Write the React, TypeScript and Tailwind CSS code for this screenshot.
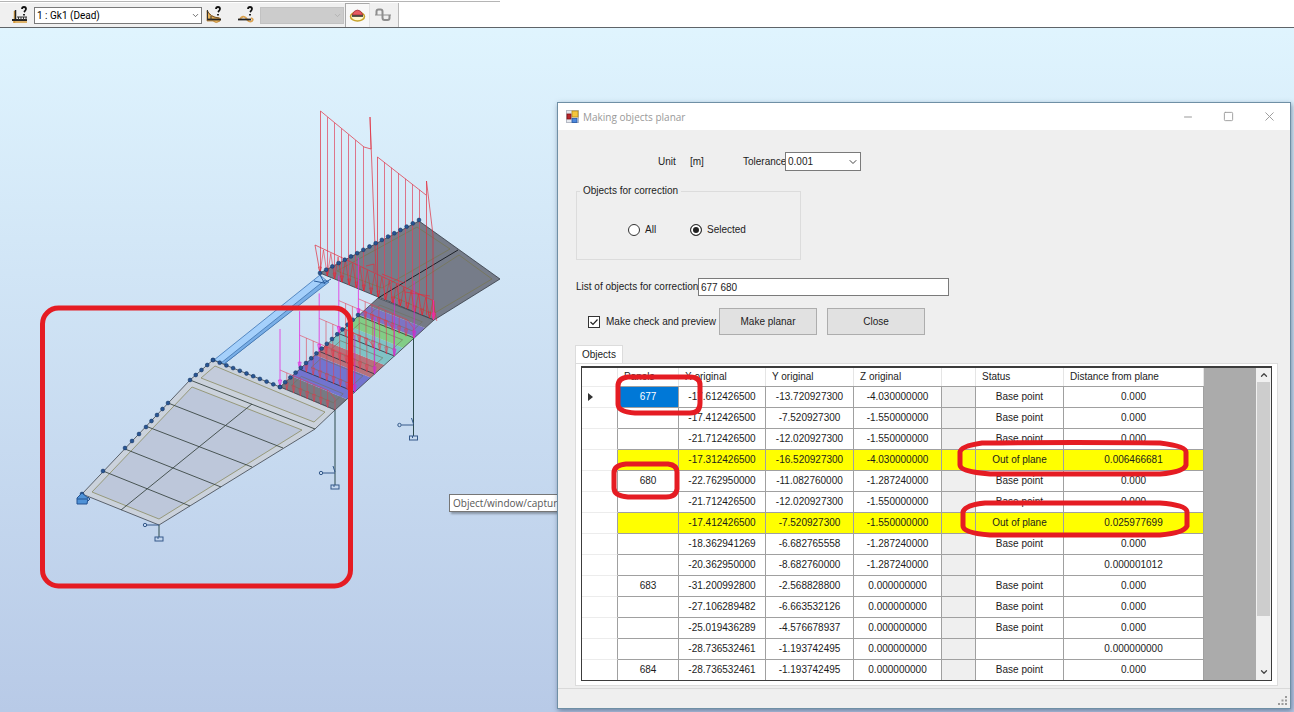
import React, { useState } from 'react';
import { ChevronDown, ChevronUp, Minus, Square, X } from 'lucide-react';

type Point = [number, number];

interface Row {
  panel: string;
  x: string;
  y: string;
  z: string;
  status: string;
  distance: string;
}

const rows: Row[] = [
  { panel: '677', x: '-17.612426500', y: '-13.720927300', z: '-4.030000000', status: 'Base point', distance: '0.000' },
  { panel: '', x: '-17.412426500', y: '-7.520927300', z: '-1.550000000', status: 'Base point', distance: '0.000' },
  { panel: '', x: '-21.712426500', y: '-12.020927300', z: '-1.550000000', status: 'Base point', distance: '0.000' },
  { panel: '', x: '-17.312426500', y: '-16.520927300', z: '-4.030000000', status: 'Out of plane', distance: '0.006466681' },
  { panel: '680', x: '-22.762950000', y: '-11.082760000', z: '-1.287240000', status: 'Base point', distance: '0.000' },
  { panel: '', x: '-21.712426500', y: '-12.020927300', z: '-1.550000000', status: 'Base point', distance: '0.000' },
  { panel: '', x: '-17.412426500', y: '-7.520927300', z: '-1.550000000', status: 'Out of plane', distance: '0.025977699' },
  { panel: '', x: '-18.362941269', y: '-6.682765558', z: '-1.287240000', status: 'Base point', distance: '0.000' },
  { panel: '', x: '-20.362950000', y: '-8.682760000', z: '-1.287240000', status: '', distance: '0.000001012' },
  { panel: '683', x: '-31.200992800', y: '-2.568828800', z: '0.000000000', status: 'Base point', distance: '0.000' },
  { panel: '', x: '-27.106289482', y: '-6.663532126', z: '0.000000000', status: 'Base point', distance: '0.000' },
  { panel: '', x: '-25.019436289', y: '-4.576678937', z: '0.000000000', status: 'Base point', distance: '0.000' },
  { panel: '', x: '-28.736532461', y: '-1.193742495', z: '0.000000000', status: '', distance: '0.000000000' },
  { panel: '684', x: '-28.736532461', y: '-1.193742495', z: '0.000000000', status: 'Base point', distance: '0.000' },
];

const lerp = (a: Point, b: Point, t: number): Point => [a[0] + (b[0] - a[0]) * t, a[1] + (b[1] - a[1]) * t];
const pts = (list: Point[]) => list.map((p) => p.join(',')).join(' ');
const spread = (a: Point, b: Point, count: number) =>
  Array.from({ length: count }, (_, i) => lerp(a, b, i / (count - 1)));

// Ramp between the lower deck and the upper deck
const leftSide = (t: number) => lerp([280, 387], [378, 298], t);
const rightSide = (t: number) => lerp([335, 410], [434, 320], t);

const bands = [
  { from: 0, to: 0.12, fill: '#767a83' },
  { from: 0.12, to: 0.36, fill: '#7274cf' },
  { from: 0.36, to: 0.5, fill: '#b7727c' },
  { from: 0.5, to: 0.69, fill: '#7fc3c6' },
  { from: 0.69, to: 0.81, fill: '#82cd86' },
  { from: 0.81, to: 0.91, fill: '#7c74c4' },
  { from: 0.91, to: 1, fill: '#767a86' },
];

const nodes: Point[] = [
  ...spread([320, 273], [419, 220], 17),
  ...spread([213, 360], [280, 387], 11),
  ...spread([280, 387], [358, 315], 16),
  ...spread([190, 380], [213, 360], 5),
  ...spread([168, 403], [146, 427], 5),
  ...spread([139, 434], [125, 448], 3),
  [103, 471],
  [82, 494],
];

const Arrow: React.FC<{ x: number; top: number; bottom: number; color: string }> = ({ x, top, bottom, color }) => (
  <path d={`M${x} ${top}V${bottom}M${x - 1.5} ${bottom - 7}L${x} ${bottom}L${x + 1.5} ${bottom - 7}Z`} stroke={color} fill="none" />
);

const Support: React.FC<{ x: number; top: number; bottom: number; arm: number }> = ({ x, top, bottom, arm }) => (
  <g stroke="#34598a" fill="none" strokeWidth={1}>
    <path d={`M${x} ${top}V${bottom}`} stroke="#2c4a4c" />
    <path d={`M${x - 12} ${arm}H${x}`} />
    {arm > top && <path d={`M${x - 2} ${arm - 7}L${x} ${arm - 1}`} />}
    <circle cx={x - 14} cy={arm} r={1.7} />
    <rect x={x - 4} y={bottom} width={8} height={4} />
    <path d={`M${x - 1} ${bottom + 2}V${bottom}`} />
  </g>
);

const Model: React.FC = () => (
  <svg width="560" height="684" viewBox="0 28 560 684" className="block" role="img" aria-label="Structure model">
    {/* beam */}
    <polygon points="320,275 328,282 224,364 214,360" fill="#a5d0fb" stroke="#3c73b4" strokeWidth="0.8" />
    <polygon points="325,280 329,282 224,364 221,363" fill="#79aee6" stroke="#3468a5" strokeWidth="0.7" />
    <path d="M314 281l10 2 7-4M320 275l5 9" stroke="#285b9a" fill="none" />

    {/* upper deck */}
    <polygon points="320,273 419,221 500,279 434,320" fill="#767c89" stroke="#343a44" strokeWidth="0.8" />
    <g fill="none" stroke="#77764f" strokeWidth="0.7">
      <path d="M337 271L417 227L450 249L382 288Z" />
      <path d="M394 297L459 255L492 279L433 314Z" />
    </g>
    <path d="M378 298L458 250" stroke="#1e2228" />

    {/* ramp */}
    {bands.map((b) => (
      <polygon key={b.from} points={pts([leftSide(b.from), leftSide(b.to), rightSide(b.to), rightSide(b.from)])} fill={b.fill} />
    ))}
    <polygon points={pts([leftSide(0), leftSide(1), rightSide(1), rightSide(0)])} fill="none" stroke="#3c3f46" strokeWidth="0.8" />
    {[0.2, 0.4, 0.6, 0.8].map((t) => (
      <polyline key={t} points={pts([leftSide(t), rightSide(t)])} stroke="#26303f" strokeWidth="0.8" />
    ))}
    {[0, 0.2, 0.4, 0.6, 0.8].map((t) => {
      const a = lerp(leftSide(t + 0.05), rightSide(t + 0.05), 0.12);
      const b = lerp(leftSide(t + 0.15), rightSide(t + 0.15), 0.12);
      const c = lerp(leftSide(t + 0.15), rightSide(t + 0.15), 0.88);
      const d = lerp(leftSide(t + 0.05), rightSide(t + 0.05), 0.88);
      return <polygon key={t} points={pts([a, b, c, d])} fill="none" stroke="#71715a" strokeWidth="0.6" />;
    })}

    {/* lower deck */}
    <polygon points="213,360 280,387 335,410 315,429 284,448 159,525 82,494 190,380" fill="#cbd2dc" stroke="#3d444c" strokeWidth="0.8" />
    <polygon points="192,387 302,430 159,519 92,492" fill="#bdc7da" stroke="#8a8b62" strokeWidth="0.8" />
    <polygon points="215,366 325,412 314,422 201,378" fill="#c3cbdb" stroke="#8a8b62" strokeWidth="0.8" />
    <g stroke="#3b4744" strokeWidth="0.9">
      <path d="M190 380L315 429M168 403L283 448M148 427L252 467M125 449L221 487M103 471L190 506M252 404L121 510" />
    </g>

    {/* loads over the upper deck */}
    <g stroke="#e0405a" fill="none" strokeWidth="0.7">
      <path d="M320.500 273V111L364 147L371 149M371 149L370 117L376 273" stroke="#e12c3c" />
      {[327.5, 334.5, 341.5, 348.5, 355.5, 363.5].map((x) => (
        <path key={x} d={`M${x} ${111 + (x - 320) * 0.82}V${273 + (x - 320) * 0.41}`} />
      ))}
      <path d="M377.500 297V157L426 195M426.500 315V181L433 235V318" stroke="#e12c3c" />
      {[384.5, 391.5, 398.5, 405.5, 412.5, 419.5].map((x) => (
        <path key={x} d={`M${x} ${157 + (x - 378) * 0.79}V${273 + (x - 320) * 0.41}`} />
      ))}
      <path d="M320 273L315 245L434 301V318" stroke="#e12c3c" />
      <path d="M366 266L374 264V272M382 274L404 283M405 292L430 296" stroke="#e12c3c" />
      {Array.from({ length: 16 }, (_, i) => {
        const x = 320 + i * 7.3;
        const y = 273 + i * 3;
        return (
          <path
            key={i}
            d={`M${x} ${y}L${x + 3.5} ${y - 23 + i * 0.4}L${x + 7.3} ${y + 3}M${x - 1.5} ${y - 6}L${x} ${y}L${x + 1.5} ${y - 6}Z`}
            stroke="#ea2230"
            strokeOpacity="0.75"
          />
        );
      })}
    </g>

    {/* loads over the ramp */}
    {[
      { t: 0, h: 17 },
      { t: 0.2, h: 34 },
      { t: 0.4, h: 33 },
      { t: 0.6, h: 33 },
      { t: 0.8, h: 17 },
    ].map(({ t, h }) => {
      const [lx, ly] = leftSide(t);
      const [rx, ry] = rightSide(t);
      return (
        <g key={t} strokeWidth="0.8">
          <g strokeOpacity="0.7">
            <path d={`M${lx} ${ly - h}l${49} ${21}l6 8V${ry}`} stroke="#e63a50" fill="none" />
            {[1, 2, 3, 4, 5, 6, 7].map((i) => (
              <Arrow key={i} x={lx + i * 6.8} top={ly - h + i * 2.9} bottom={ly + i * 2.9} color="#e33a4c" />
            ))}
          </g>
          <Arrow x={lx} top={ly - 58} bottom={ly} color="#e42be0" />
          {t > 0 && <Arrow x={rx} top={ry - 57} bottom={ry} color="#d22ad0" />}
        </g>
      );
    })}
    <Arrow x={433.5} top={300} bottom={320} color="#f02ca0" />

    {/* nodes and supports */}
    {nodes.map(([x, y], i) => (
      <circle key={i} cx={x} cy={y} r={1.9} fill="#285594" stroke="#153765" strokeWidth="0.6" />
    ))}
    <path d="M82 493l6 5-1 6H77v-6Z" fill="#4f92d7" stroke="#245391" />
    <path d="M77 499h10M88 497l2 2-2 2" stroke="#245391" fill="none" />
    <Support x={159} top={525} bottom={537} arm={525} />
    <Support x={335} top={410} bottom={485} arm={473} />
    <Support x={413.5} top={338} bottom={436} arm={425} />
  </svg>
);

const QuestionMark: React.FC = () => (
  <path d="M10 3q0-2 2-2t2 2q0 1-2 3M12 8v1.500" stroke="#111" strokeWidth="1.800" fill="none" />
);

const Toolbar: React.FC = () => {
  const [loadCase, setLoadCase] = useState('1 : Gk1 (Dead)');

  return (
    <header className="h-7 bg-white border-b border-[#5f6468]">
      <div className="h-[3px] w-[500px]">
        <div className="h-0.5 bg-white border-b border-[#b5b5b5]" />
      </div>
      <div className="flex h-6 w-[399px] items-center bg-[#f0f0f0] border-r border-[#b9b9b9] pl-3">
        <button aria-label="Load types" className="mr-1.5">
          <svg width="16" height="18" viewBox="0 0 16 18">
            <path d="M2.500 5v12M1 16h14" stroke="#d59a3a" strokeWidth="1.500" />
            <path d="M3.500 4v11" stroke="#222" strokeWidth="1.500" />
            <path d="M0 14h15" stroke="#222" strokeWidth="2" />
            <path d="M6.500 11v3M9 11v3M11.500 11v3M14 11v3M5 11h10" stroke="#333" strokeWidth="1" fill="none" />
            <QuestionMark />
          </svg>
        </button>
        <div className="relative">
          <select
            aria-label="Load case"
            value={loadCase}
            onChange={(e) => setLoadCase(e.target.value)}
            className="block h-[17px] w-[168px] appearance-none bg-white border border-[#7a7a7a] pl-[2px] text-[10px] leading-[15px] text-black font-[Roboto,sans-serif]"
          >
            <option>1 : Gk1 (Dead)</option>
          </select>
          <ChevronDown size={9} className="absolute right-[2px] top-1 text-[#444] pointer-events-none" />
        </div>
        <button aria-label="Diagrams" className="ml-1 mr-4">
          <svg width="16" height="18" viewBox="0 0 16 18">
            <path d="M1 5q3 7 13 7v3q-4 3-7 0H1Z" fill="#e7b45b" stroke="#b87e30" strokeWidth="0.800" />
            <path d="M1 4q3 7 12 8" stroke="#7b5420" fill="none" />
            <path d="M1 13.500h14" stroke="#222" strokeWidth="1.800" />
            <path d="M1.500 4v10M5 10v4" stroke="#333" />
            <QuestionMark />
          </svg>
        </button>
        <button aria-label="Deformation" className="mr-1.5">
          <svg width="16" height="18" viewBox="0 0 16 18">
            <path d="M2 13q3-4 6-1 3 5 6 3 2-2-1-3" fill="none" stroke="#dba250" strokeWidth="1.800" />
            <path d="M0 13.500h13" stroke="#222" strokeWidth="1.800" />
            <QuestionMark />
          </svg>
        </button>
        <div className="relative">
          <select disabled aria-label="Combination component" className="block h-[17px] w-[84px] appearance-none bg-[#cccccc] border border-[#c2c2c2] opacity-100" />
          <ChevronDown size={9} className="absolute right-[2px] top-1 text-[#aaa] pointer-events-none" />
        </div>
        <button aria-label="Maps" className="flex h-6 w-[25px] items-center justify-center ml-px bg-[#f8f8f8] border-l border-t border-r border-[#a8a8a8] border-r-[#e2e2e2]">
          <svg width="17" height="15" viewBox="0 0 17 15">
            <ellipse cx="8.500" cy="8.500" rx="7" ry="4.500" fill="#fff8cf" stroke="#c7a22a" strokeWidth="1.500" />
            <path d="M3 7q2-5 5.500-5T14 7Z" fill="#e65a62" stroke="#8b1e29" strokeWidth="0.600" />
            <path d="M3 8h11" stroke="#222" strokeWidth="1.500" />
          </svg>
        </button>
        <button aria-label="Dynamic results" className="ml-[5px]">
          <svg width="16" height="16" viewBox="0 0 16 16" fill="none">
            <path d="M1.500 8V4.500q0-2 2-2h2q2 0 2 2v6q0 2.500 2 2.500h3q2 0 2-2V8" stroke="#8e8e8e" strokeWidth="2" />
            <path d="M0 8h16" stroke="#8e8e8e" />
          </svg>
        </button>
      </div>
    </header>
  );
};

const FormIcon: React.FC = () => (
  <svg width="13" height="13" viewBox="0 0 13 13">
    <rect x="0.500" y="0.500" width="12" height="12" fill="#e5e8ee" stroke="#b5bac5" />
    <rect x="6" y="1" width="6" height="6" fill="#f4c63e" stroke="#b58a17" strokeWidth="0.800" />
    <rect x="1" y="4" width="4" height="5" fill="#b8262c" stroke="#7e1014" strokeWidth="0.800" />
    <rect x="6" y="8.500" width="5" height="4" fill="#4c88dc" stroke="#2456a3" strokeWidth="0.800" />
  </svg>
);

const headCell = 'h-[18px] p-0 pl-[6px] text-left font-normal border-r border-[#e5e5e5]';
const bodyCell = 'h-[21px] p-0 text-center border-r border-t border-[#a0a0a0]';

const ObjectsTable: React.FC = () => (
  <div className="flex h-[315px] overflow-hidden bg-[#ababab] border border-t-2 border-[#3c3c3c]">
    <div className="flex-1 overflow-hidden">
      <table className="w-[622px] table-fixed border-separate border-spacing-0 leading-[14px]">
        <colgroup>
          <col className="w-[36px]" />
          <col className="w-[61px]" />
          <col className="w-[87px]" />
          <col className="w-[88px]" />
          <col className="w-[88px]" />
          <col className="w-[34px]" />
          <col className="w-[88px]" />
          <col className="w-[140px]" />
        </colgroup>
        <thead>
          <tr className="bg-white">
            <th className={headCell} aria-label="Current row" />
            <th className={headCell}>Panels</th>
            <th className={headCell}>X original</th>
            <th className={headCell}>Y original</th>
            <th className={headCell}>Z original</th>
            <th className={headCell} aria-label="Spacer" />
            <th className={headCell}>Status</th>
            <th className={headCell}>Distance from plane</th>
          </tr>
        </thead>
        <tbody>
          {[...rows, null].map((row, index) => {
            const out = row?.status === 'Out of plane';
            return (
              <tr key={index} className={out ? 'bg-[#ffff00]' : 'bg-white'}>
                <td className="h-[21px] bg-white p-0 pl-[6px] border-t border-t-[#ececec] border-r border-r-[#a0a0a0]">
                  {index === 0 && (
                    <svg width="5" height="8" viewBox="0 0 5 8">
                      <path d="M0 0L5 4L0 8Z" fill="#333" />
                    </svg>
                  )}
                </td>
                <td className={index === 0 ? `${bodyCell} bg-[#0078d7] text-white` : bodyCell}>{row?.panel}</td>
                <td className={bodyCell}>{row?.x}</td>
                <td className={bodyCell}>{row?.y}</td>
                <td className={bodyCell}>{row?.z}</td>
                <td className={out ? bodyCell : `${bodyCell} bg-[#efefef]`} />
                <td className={bodyCell}>{row?.status}</td>
                <td className={bodyCell}>{row?.distance}</td>
              </tr>
            );
          })}
        </tbody>
      </table>
    </div>
    <div className="flex w-[15px] flex-col items-center bg-[#f0f0f0] text-[#444]">
      <button aria-label="Scroll up" className="flex h-[14px] items-center">
        <ChevronUp size={10} strokeWidth={3} />
      </button>
      <div className="h-[234px] w-[13px] bg-[#cdcdcd]" />
      <button aria-label="Scroll down" className="mt-auto flex h-4 items-center">
        <ChevronDown size={10} strokeWidth={3} />
      </button>
    </div>
  </div>
);

const PlanarDialog: React.FC = () => {
  const [scope, setScope] = useState('selected');
  const [list, setList] = useState('677 680');
  const [preview, setPreview] = useState(true);

  const radio =
    'h-3 w-3 appearance-none rounded-full border border-[#333] bg-white checked:shadow-[inset_0_0_0_2px_white] checked:bg-[#222]';

  return (
    <section
      aria-label="Making objects planar"
      className="bg-[#efefef] border border-[#6f8fa5] shadow-[1px_2px_5px_rgba(40,60,90,0.5)] text-[10px] leading-[14px] whitespace-nowrap text-[#1c1c1c] font-['Liberation_Sans',Arial,sans-serif]"
    >
      <div className="flex h-[27px] items-center bg-white pl-2 text-[#999]">
        <FormIcon />
        <h1 className="ml-1 flex-1 text-[10px] font-['Open_Sans','Noto_Sans',sans-serif]">Making objects planar</h1>
        <button aria-label="Minimize" className="flex w-[41px] justify-center">
          <Minus size={12} strokeWidth={2} />
        </button>
        <button aria-label="Maximize" className="flex w-[41px] justify-center">
          <Square size={11} strokeWidth={2} />
        </button>
        <button aria-label="Close window" className="flex w-[41px] justify-center">
          <X size={15} strokeWidth={1.5} />
        </button>
      </div>

      <div className="px-[18px] pt-[22px]">
        <div className="flex items-center pl-[82px]">
          <span className="w-8">Unit</span>
          <span className="w-[53px]">[m]</span>
          <label htmlFor="tolerance" className="w-[42px]">Tolerance</label>
          <div className="relative">
            <select id="tolerance" className="block h-[19px] w-[76px] appearance-none border border-[#7a7a7a] bg-white pl-[2px] leading-[16px]">
              <option>0.001</option>
            </select>
            <ChevronDown size={12} className="absolute right-[2px] top-1 text-[#444] pointer-events-none" />
          </div>
        </div>

        <fieldset className="mt-[13px] h-[76px] w-[225px] border border-[#dcdcdc] pl-[51px]">
          <legend className="-ml-[48px] px-[3px]">Objects for correction</legend>
          <div className="mt-[25px] flex items-center">
            <label className="flex w-[62px] items-center gap-[5px]">
              <input type="radio" name="scope" className={radio} checked={scope === 'all'} onChange={() => setScope('all')} />
              All
            </label>
            <label className="flex items-center gap-[5px]">
              <input type="radio" name="scope" className={radio} checked={scope === 'selected'} onChange={() => setScope('selected')} />
              Selected
            </label>
          </div>
        </fieldset>

        <div className="mt-[18px] flex items-center">
          <label htmlFor="objects" className="w-[122px]">List of objects for correction</label>
          <input
            id="objects"
            value={list}
            onChange={(e) => setList(e.target.value)}
            className="h-[18px] w-[251px] border border-[#7a7a7a] bg-white px-[2px]"
          />
        </div>

        <div className="mt-3 flex items-center pl-3">
          <span className="relative flex">
            <input
              id="preview"
              type="checkbox"
              checked={preview}
              onChange={(e) => setPreview(e.target.checked)}
              className="h-3 w-3 appearance-none border border-[#333] bg-white"
            />
            {preview && (
              <svg width="12" height="12" viewBox="0 0 12 12" className="absolute left-0 top-0 pointer-events-none">
                <path d="M2.500 6L5 8.500L9.500 3.500" stroke="#222" fill="none" strokeWidth="1.200" />
              </svg>
            )}
          </span>
          <label htmlFor="preview" className="ml-[6px] w-[113px]">Make check and preview</label>
          <button className="h-[27px] w-[98px] border border-[#adadad] bg-[#e1e1e1]">Make planar</button>
          <button className="ml-[10px] h-[27px] w-[98px] border border-[#adadad] bg-[#e1e1e1]">Close</button>
        </div>
      </div>

      <div className="mt-[10px] pl-[17px] pr-3">
        <div role="tablist" className="flex">
          <button role="tab" aria-selected="true" className="h-[18px] border border-b-0 border-[#dcdcdc] bg-white px-[6px]">
            Objects
          </button>
        </div>
        <div role="tabpanel" className="border border-[#dcdcdc] bg-white pt-[2px] pb-1 pl-[5px] pr-[5px]">
          <ObjectsTable />
        </div>
      </div>

      <footer className="mt-0.5 flex h-5 items-end justify-end border-t border-[#d9d9d9] p-0.5">
        <svg width="10" height="10" viewBox="0 0 10 10" fill="#9a9a9a">
          <path d="M7 0h2v2H7zM7 3.500h2v2H7zM7 7h2v2H7zM3.500 3.500h2v2h-2zM3.500 7h2v2h-2zM0 7h2v2H0z" />
        </svg>
      </footer>
    </section>
  );
};

// Red pen marks drawn over the model and the table
const Marks: React.FC = () => (
  <svg width="1294" height="712" viewBox="0 0 1294 712" fill="none" stroke="#e51c23" strokeWidth="5" aria-hidden="true">
    <rect x="42.500" y="308" width="308" height="278" rx="16" />
    <path d="M628 377H690Q700 377 700 385V403Q700 413 690 413H635Q618 412 618 404V386Q618 378 628 377Z" />
    <path d="M626 464H668Q677 465 677 472V489Q676 497 666 497H628Q614 496 614 488V473Q614 465 626 464Z" />
    <path d="M982 443Q1080 442 1160 443Q1186 446 1186 452V465Q1184 472 1160 474H990Q960 472 960 465V452Q961 446 982 443Z" />
    <path d="M985 503H1160Q1187 505 1187 512V526Q1184 533 1160 535H990Q963 533 963 526V512Q965 505 985 503Z" />
  </svg>
);

const App: React.FC = () => (
  <div className="relative min-h-screen overflow-hidden bg-linear-to-b from-[#e1f6ff] to-[#b8cae7]">
    <Toolbar />
    <main>
      <Model />
      <div
        role="tooltip"
        className="absolute left-[449px] top-[494px] h-[18px] border border-[#767676] bg-white px-[3px] text-[10px] leading-[16px] whitespace-nowrap text-[#575757] shadow-[2px_2px_2px_rgba(0,0,0,0.3)] font-['Open_Sans','Noto_Sans',sans-serif]"
      >
        Object/window/capture
      </div>
      <div className="absolute left-[557px] top-[102px] w-[734px]">
        <PlanarDialog />
      </div>
      <div className="absolute left-0 top-0 pointer-events-none">
        <Marks />
      </div>
    </main>
  </div>
);

export default App;
